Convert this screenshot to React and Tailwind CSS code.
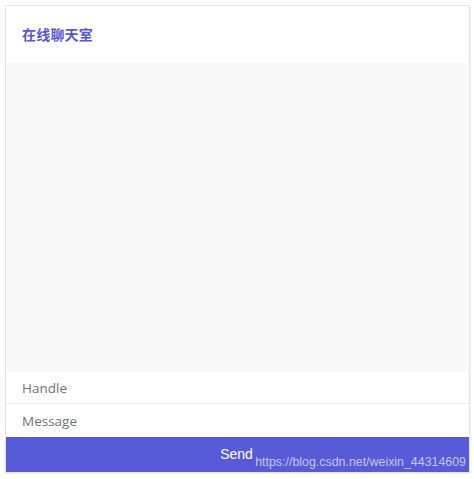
import React, { useState } from 'react';

function App() {
  const [handle, setHandle] = useState('');
  const [message, setMessage] = useState('');

  return (
    <div className="w-[474px] h-[479px] bg-white pt-[5px] pl-[5px] font-['Noto_Sans','Noto_Sans_CJK_SC',sans-serif]">
      <div className="relative w-[465px] border border-[#e4e4e4] shadow-[1px_1px_2px_rgba(0,0,0,0.06)] bg-white">
        {/* Header */}
        <div className="h-[57px] flex items-center px-4">
          <h2 className="text-[14px] font-bold text-[#5757cf] tracking-[0.2px] font-['Noto_Sans_CJK_SC',sans-serif]">
            在线聊天室
          </h2>
        </div>

        {/* Chat window */}
        <div className="h-[309px] bg-[#f9f9f9]"></div>

        {/* Inputs */}
        <input
          type="text"
          placeholder="Handle"
          value={handle}
          onChange={(e) => setHandle(e.target.value)}
          className="block w-full h-[32px] px-4 border-b border-[#ececec] text-[13.5px] text-[#555] placeholder:text-[#737373] outline-none font-['Open_Sans',sans-serif]"
        />
        <input
          type="text"
          placeholder="Message"
          value={message}
          onChange={(e) => setMessage(e.target.value)}
          className="block w-full h-[33px] px-4 text-[13.5px] text-[#555] placeholder:text-[#737373] outline-none font-['Open_Sans',sans-serif]"
        />

        {/* Send */}
        <button className="block w-full h-[35px] bg-[#575bd8] text-white text-[14px] font-medium pr-[2px] font-['Liberation_Sans',Arial,sans-serif]">
          Send
        </button>

        {/* Watermark */}
        <span className="absolute right-[3px] bottom-0 text-[12.4px] text-[#c4c6f2] pointer-events-none font-['Liberation_Sans',Arial,sans-serif]">
          https://blog.csdn.net/weixin_44314609
        </span>
      </div>
    </div>
  );
}

export default App;
